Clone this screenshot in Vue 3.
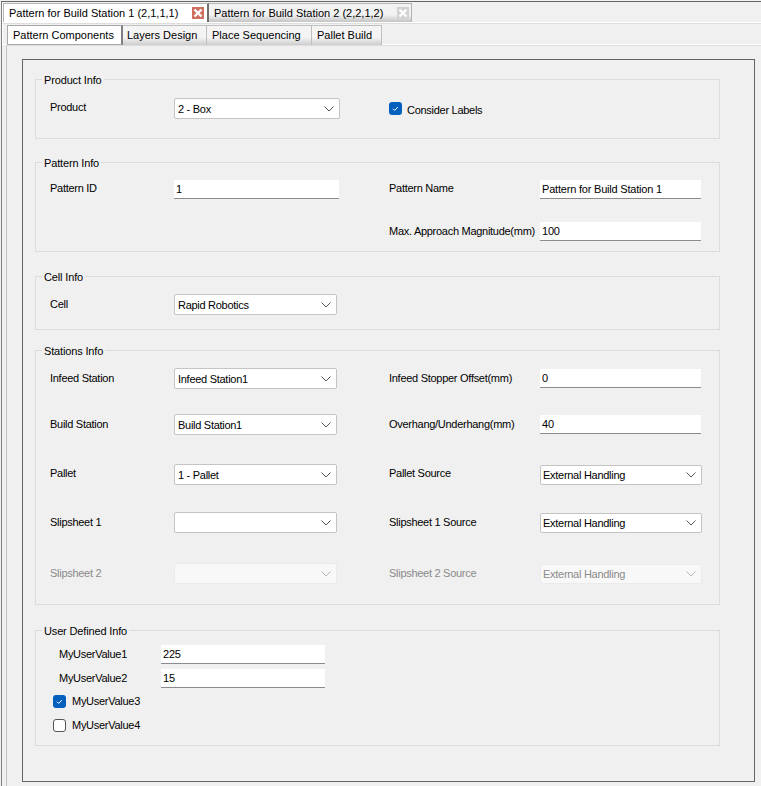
<template>
  <div class="window">
    <div class="top-line"></div>
    <div class="frame">
      <div class="doc-tabs">
        <div class="doc-tab active">
          <span>Pattern for Build Station 1 (2,1,1,1)</span>
          <span class="close red"><svg viewBox="0 0 12 12" width="12" height="12"><path d="M2.5 2.5l7 7M9.5 2.5l-7 7" /></svg></span>
        </div>
        <div class="doc-tab">
          <span>Pattern for Build Station 2 (2,2,1,2)</span>
          <span class="close"><svg viewBox="0 0 12 12" width="12" height="12"><path d="M2.5 2.5l7 7M9.5 2.5l-7 7" /></svg></span>
        </div>
      </div>
      <div class="sub-tabs">
        <div v-for="(tab, i) in subTabs" :key="tab" class="sub-tab" :class="{ active: i === 0 }">{{ tab }}</div>
      </div>
      <div class="page">
        <div class="panel">
          <div class="group product">
            <div class="group-title">Product Info</div>
            <div class="grid">
              <label class="lbl raise2">Product</label>
              <div class="combo w166">
                <span>2 - Box</span>
                <svg class="chev" viewBox="0 0 10 6" width="10" height="6"><path d="M.5 .5L5 5l4.500-4.500" /></svg>
              </div>
              <div class="check-row span2">
                <span class="check on"><svg viewBox="0 0 13 13" width="13" height="13"><path d="M4 6.800l1.600 1.600 3.200-3.200" /></svg></span>
                <span class="drop1">Consider Labels</span>
              </div>
            </div>
          </div>

          <div class="group pattern">
            <div class="group-title">Pattern Info</div>
            <div class="grid">
              <label class="lbl raise1">Pattern ID</label>
              <input class="txt w165" value="1" />
              <label class="lbl raise1">Pattern Name</label>
              <input class="txt" value="Pattern for Build Station 1" />
              <div class="span2"></div>
              <label class="lbl">Max. Approach Magnitude(mm)</label>
              <input class="txt" value="100" />
            </div>
          </div>

          <div class="group cell">
            <div class="group-title">Cell Info</div>
            <div class="grid">
              <label class="lbl raise1">Cell</label>
              <div class="combo w163">
                <span>Rapid Robotics</span>
                <svg class="chev" viewBox="0 0 10 6" width="10" height="6"><path d="M.5 .5L5 5l4.500-4.500" /></svg>
              </div>
            </div>
          </div>

          <div class="group stations">
            <div class="group-title">Stations Info</div>
            <div class="grid">
              <template v-for="row in stationRows" :key="row.left">
                <label class="lbl" :class="{ off: row.disabled, raise1: row.raised }">{{ row.left }}</label>
                <div class="combo w163" :class="{ off: row.disabled }">
                  <span>{{ row.leftValue }}</span>
                  <svg class="chev" viewBox="0 0 10 6" width="10" height="6"><path d="M.5 .5L5 5l4.500-4.500" /></svg>
                </div>
                <label class="lbl" :class="{ off: row.disabled, raise1: row.raised }">{{ row.right }}</label>
                <input v-if="row.input" class="txt nudge" :value="row.rightValue" />
                <div v-else class="combo nudge" :class="{ off: row.disabled }">
                  <span>{{ row.rightValue }}</span>
                  <svg class="chev" viewBox="0 0 10 6" width="10" height="6"><path d="M.5 .5L5 5l4.500-4.500" /></svg>
                </div>
              </template>
            </div>
          </div>

          <div class="group user">
            <div class="group-title">User Defined Info</div>
            <div class="user-fields">
              <div class="user-row">
                <label class="lbl">MyUserValue1</label>
                <input class="txt w164" value="225" />
              </div>
              <div class="user-row">
                <label class="lbl">MyUserValue2</label>
                <input class="txt w164" value="15" />
              </div>
              <div class="check-row first-check">
                <span class="check on"><svg viewBox="0 0 13 13" width="13" height="13"><path d="M4 6.800l1.600 1.600 3.200-3.200" /></svg></span>
                <span>MyUserValue3</span>
              </div>
              <div class="check-row">
                <span class="check"></span>
                <span>MyUserValue4</span>
              </div>
            </div>
          </div>
        </div>
      </div>
    </div>
  </div>
</template>

<script setup>
const subTabs = ['Pattern Components', 'Layers Design', 'Place Sequencing', 'Pallet Build'];

const stationRows = [
  { left: 'Infeed Station', leftValue: 'Infeed Station1', right: 'Infeed Stopper Offset(mm)', rightValue: '0', input: true },
  { left: 'Build Station', leftValue: 'Build Station1', right: 'Overhang/Underhang(mm)', rightValue: '40', input: true },
  { left: 'Pallet', leftValue: '1 - Pallet', right: 'Pallet Source', rightValue: 'External Handling', raised: true },
  { left: 'Slipsheet 1', leftValue: '', right: 'Slipsheet 1 Source', rightValue: 'External Handling' },
  { left: 'Slipsheet 2', leftValue: '', right: 'Slipsheet 2 Source', rightValue: 'External Handling', disabled: true },
];
</script>

<style scoped>
.window {
  width: 761px;
  height: 786px;
  overflow: hidden;
  background: #f0f0f0;
  color: #000;
  font-family: "Liberation Sans", Arial, sans-serif;
  font-size: 11px;
  letter-spacing: -0.28px;
  line-height: 14px;
}
.top-line {
  height: 1px;
  margin: 1px 0 0 1px;
  background: #666;
}
.frame {
  margin-left: 1px;
  height: 784px;
  box-sizing: border-box;
  border-left: 1px solid #808080;
}

/* top document tabs */
.doc-tabs {
  display: flex;
  height: 21px;
  box-sizing: border-box;
  padding-top: 1px;
  border-left: 1px solid #fff;
  border-bottom: 1px solid #fff;
  letter-spacing: 0;
}
.doc-tab {
  width: 203px;
  height: 19px;
  box-sizing: border-box;
  padding: 0 2px 0 5px;
  display: flex;
  align-items: center;
  justify-content: space-between;
  background: linear-gradient(#f2f2f2 60%, #c4c4c4);
  border: 1px solid #b4b4b4;
  border-bottom: none;
  border-left: none;
}
.doc-tab.active {
  width: 206px;
  padding: 0 3px 0 5px;
  background: #fff;
  border-left: 1px solid #b4b4b4;
  border-right: 2px solid #707070;
}
.close {
  width: 12px;
  height: 12px;
  background: #d2d2d2;
}
.close.red {
  background: #cf6f60;
}
.close svg {
  display: block;
}
.close path {
  stroke: #fff;
  stroke-width: 2.4;
  fill: none;
}

/* second row and page */
.sub-tabs {
  display: flex;
  height: 22px;
  box-sizing: border-box;
  padding: 1px 0 0 4px;
  border-top: 1px solid #dedede;
  border-left: 1px solid #fff;
  border-bottom: 1px solid #fff;
  letter-spacing: 0;
}
.sub-tab {
  height: 20px;
  box-sizing: border-box;
  padding: 2px 0 0 5px;
  background: linear-gradient(#f4f4f4 60%, #cdcdcd);
  border: 1px solid #c0c0c0;
  border-left: none;
  border-bottom: none;
}
.sub-tab:nth-child(1) { width: 116px; }
.sub-tab:nth-child(2) { width: 84px; padding-left: 4px; }
.sub-tab:nth-child(3) { width: 105px; }
.sub-tab:nth-child(4) { width: 70px; }
.sub-tab.active {
  padding-left: 5px;
  background: #fff;
  border: 1px solid #a8a8a8;
  border-right: 2px solid #808080;
  border-bottom: 1px solid #a8a8a8;
}
.page {
  height: 741px;
  box-sizing: border-box;
  margin-left: 4px;
  padding: 13px 0 0 15px;
  border-top: 1px solid #dedede;
  border-left: 1px solid #c4c4c4;
}
.panel {
  width: 733px;
  height: 723px;
  box-sizing: border-box;
  padding: 19px 0 0 12px;
  border: 1px solid #646464;
}

/* group boxes */
.group {
  width: 685px;
  box-sizing: border-box;
  border: 1px solid #dcdcdc;
}
.group-title {
  width: fit-content;
  margin: -7px 0 0 6px;
  padding: 0 2px;
  background: #f0f0f0;
  letter-spacing: -0.15px;
}
.product { height: 60px; }
.pattern { height: 90px; margin-top: 23px; }
.cell { height: 54px; margin-top: 24px; }
.stations { height: 255px; margin-top: 20px; }
.user { height: 116px; margin-top: 25px; }

.grid {
  display: grid;
  grid-template-columns: 124px 215px 151px 161px;
  padding-left: 14px;
  align-items: center;
}
.product .grid { margin-top: 11px; grid-template-rows: 21px; }
.pattern .grid { margin-top: 8px; grid-template-rows: 22px 22px; row-gap: 20px; }
.cell .grid { margin-top: 10px; grid-template-rows: 21px; }
.stations .grid {
  margin-top: 10px;
  grid-template-rows: 46px 50px 48px 51px 21px;
  align-items: start;
}
.stations .lbl { line-height: 21px; }
.nudge { margin-top: 1px; }
.combo.nudge {
  width: 162px;
  height: 20px;
  padding: 0 5px 0 2px;
}
.span2 { grid-column: span 2; }

.lbl { white-space: nowrap; }
.lbl.off,
.combo.off {
  color: #8a8a8a;
}
/* text baselines that sit a pixel off the control next to them */
.raise1 { margin-top: -2px; }
.stations .raise1 { margin-top: -1px; }
.raise2 { margin-top: -3px; }
.drop1 { margin-top: 2px; }

/* form controls */
.txt {
  display: block;
  width: 161px;
  height: 19px;
  box-sizing: border-box;
  padding: 0 2px;
  border: none;
  border-bottom: 1px solid #8c8c8c;
  background: #fff;
  font: inherit;
  letter-spacing: -0.2px;
  color: #000;
  outline: none;
}
.combo {
  width: 161px;
  height: 21px;
  box-sizing: border-box;
  padding: 1px 5px 0 3px;
  display: flex;
  align-items: center;
  justify-content: space-between;
  background: #fff;
  border: 1px solid #c4c4c4;
  border-radius: 2px;
}
.combo.off {
  background: #f8f8f8;
  border-color: #ebebeb;
}
.w166 { width: 166px; }
.w165 { width: 165px; }
.w164 { width: 164px; }
.w163 { width: 163px; }
.chev {
  flex: none;
  margin-left: auto;
}
.chev path {
  fill: none;
  stroke: #555;
  stroke-width: 1;
}
.combo.off .chev path {
  stroke: #b4b4b4;
}

.check-row {
  display: flex;
  align-items: center;
  gap: 5px;
}
.check {
  width: 13px;
  height: 13px;
  box-sizing: border-box;
  border: 1px solid #555;
  border-radius: 3px;
  background: #fff;
}
.check.on {
  background: #0560bd;
  border: none;
}
.check svg {
  display: block;
}
.check path {
  fill: none;
  stroke: #fff;
  stroke-width: 1;
}

/* user defined block */
.user-fields {
  margin-top: 4px;
  padding-left: 17px;
  display: flex;
  flex-direction: column;
}
.user-row {
  display: flex;
  align-items: center;
  height: 24px;
  padding-left: 6px;
}
.user-row .lbl {
  width: 102px;
}
.user-fields .check-row {
  height: 24px;
  gap: 6px;
}
.user-fields .first-check {
  margin-top: -1px;
}
</style>

<style>
html,
body {
  background: #f0f0f0;
}
</style>
